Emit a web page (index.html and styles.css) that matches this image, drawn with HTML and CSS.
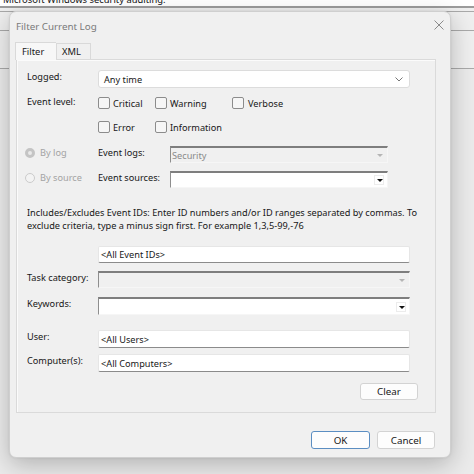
FILE: index.html
```html
<!DOCTYPE html>
<html>
<head>
<meta charset="utf-8">
<link rel="stylesheet" href="styles.css">
</head>
<body>
<div class="screen">
  <div class="topstrip"><span class="toptext">Microsoft Windows security auditing.</span></div>
  <div class="backdrop">
    <div class="brow r1"></div>
    <div class="brow r2"></div>
    <div class="brow r3"></div>
  </div>

  <div class="dialog">
    <div class="titlebar">
      <span class="title">Filter Current Log</span>
      <svg class="close" width="10" height="10" viewBox="0 0 10 10"><path d="M0.5 0.5 L9.5 9.5 M9.5 0.5 L0.5 9.5" stroke="#8a8a8a" stroke-width="1"/></svg>
    </div>
    <div class="tabs">
      <div class="tab active">Filter</div>
      <div class="tab">XML</div>
    </div>
    <div class="panel">
      <div class="row logged">
        <div class="lbl">Logged:</div>
        <div class="select">
          <span>Any time</span>
          <svg width="8" height="5" viewBox="0 0 8 5"><path d="M0.5 0.5 L4 4 L7.5 0.5" fill="none" stroke="#777" stroke-width="1"/></svg>
        </div>
      </div>

      <div class="row levels">
        <div class="lbl">Event level:</div>
        <div class="checks">
          <label class="chk"><span class="box"></span>Critical</label>
          <label class="chk"><span class="box"></span>Warning</label>
          <label class="chk"><span class="box"></span>Verbose</label>
          <label class="chk"><span class="box"></span>Error</label>
          <label class="chk"><span class="box"></span>Information</label>
        </div>
      </div>

      <div class="srcrow bylog">
        <div class="radio dis"><span class="dot on"></span>By log</div>
        <div class="lbl2">Event logs:</div>
        <div class="combo disabled"><span>Security</span><span class="arrow grey"></span></div>
      </div>
      <div class="srcrow bysource">
        <div class="radio dis"><span class="dot"></span>By source</div>
        <div class="lbl2">Event sources:</div>
        <div class="combo"><span></span><span class="arrow"></span></div>
      </div>

      <p class="help">Includes/Excludes Event IDs: Enter ID numbers and/or ID ranges separated by commas. To<br>exclude criteria, type a minus sign first. For example 1,3,5-99,-76</p>

      <div class="row ids">
        <div class="lbl"></div>
        <div class="text">&lt;All Event IDs&gt;</div>
      </div>
      <div class="row task">
        <div class="lbl">Task category:</div>
        <div class="combo disabled wide"><span></span><span class="arrow grey"></span></div>
      </div>
      <div class="row keywords">
        <div class="lbl">Keywords:</div>
        <div class="combo wide"><span></span><span class="arrow"></span></div>
      </div>
      <div class="row user">
        <div class="lbl">User:</div>
        <div class="text">&lt;All Users&gt;</div>
      </div>
      <div class="row computer">
        <div class="lbl">Computer(s):</div>
        <div class="text">&lt;All Computers&gt;</div>
      </div>
      <div class="clearrow"><div class="btn clear">Clear</div></div>
    </div>
    <div class="footer">
      <div class="btn ok">OK</div>
      <div class="btn cancel">Cancel</div>
    </div>
  </div>
</div>
</body>
</html>
```
FILE: styles.css
```css
* { box-sizing: border-box; }
html, body { margin: 0; padding: 0; }
body {
  width: 474px; height: 474px; overflow: hidden;
  font-family: "Noto Sans", "Open Sans", sans-serif;
  font-size: 9.2px;
  color: #171717;
  background: #e9e9e9;
}
.screen { position: relative; width: 474px; height: 474px; overflow: hidden; background: #ebebeb; }
.topstrip {
  height: 8px; background: #fff; border-bottom: 2px solid #9c9c9c; overflow: hidden;
}
.toptext {
  display: block; font-family: "Noto Sans", sans-serif; font-size: 9.4px; line-height: 12px;
  margin-top: -6px; padding-left: 3px; color: #111;
}
.backdrop { background: #efefef; }
.brow { border-bottom: 1px solid #a9a9a9; }
.r1 { height: 4px; }
.r2 { height: 19px; }
.r3 { height: 38px; }

.dialog {
  position: absolute; left: 9px; top: 11px; width: 442px; height: 447px;
  background: #f0f0f0; border: 1px solid #cfcfcf; border-radius: 7px;
  box-shadow: 0 7px 24px rgba(0,0,0,0.24), 0 0 3px rgba(0,0,0,0.08);
  display: flex; flex-direction: column;
}
.titlebar {
  height: 30px; display: flex; align-items: center; justify-content: space-between;
  padding: 0 6px 2px 6px;
}
.title { color: #7a7a7a; font-size: 9.8px; }
.close { margin-top: -2px; }

.tabs { display: flex; height: 17px; padding-left: 5px; position: relative; z-index: 1; }
.tab {
  height: 16px; margin-top: 1px; padding: 0 0 0 8px; line-height: 15px;
  border: 1px solid #d9d9d9; border-bottom: none; background: #f0f0f0; font-size: 9.4px;
}
.tab.active {
  height: 18px; margin-top: 0; width: 41px; padding: 0 0 0 6px; background: #f7f7f7; line-height: 17px;
  border-color: #d9d9d9; border-right: none;
}
.tab:not(.active) { width: 35px; padding-left: 5px; }

.panel {
  margin-left: 6px; width: 420px; height: 354px;
  border: 1px solid #dadada; background: #f0f0f0;
  box-shadow: inset 1px 1px 0 #fbfbfb;
  padding: 10px 25px 0 10px;
}
.row { display: grid; grid-template-columns: 71px 1fr; align-items: start; }
.lbl { line-height: 13px; white-space: nowrap; }

.select {
  height: 18px; background: #fff; border: 1px solid #dcdcdc; border-radius: 3px;
  display: flex; align-items: center; justify-content: space-between; padding: 0 6px 0 5px;
}
.logged { height: 18px; }

.levels { margin-top: 7px; }
.checks { display: grid; grid-template-columns: 57px 77px auto; row-gap: 8px; }
.chk { display: flex; align-items: center; height: 16px; white-space: nowrap; }
.box {
  width: 12px; height: 12px; border: 1px solid #8c8c8c; border-radius: 2px; background: #f6f6f6;
  margin-right: 3px; flex: none;
}
.chk:nth-child(3) .box { margin-right: 4px; }

.srcrow { display: grid; grid-template-columns: 71px 72px 218px; align-items: start; height: 17px; }
.bylog { margin-top: 11px; }
.bysource { margin-top: 8px; }
.radio { display: flex; align-items: center; height: 13px; margin-left: -2px; color: #a3a3a3; }
.dot {
  width: 10px; height: 10px; border-radius: 50%; border: 1px solid #cbcbcb; background: #f3f3f3;
  margin-right: 5px; flex: none;
}
.dot.on { border: 3px solid #c4c4c4; background: #e9e9e9; }
.lbl2 { line-height: 13px; white-space: nowrap; }

.combo {
  height: 17px; display: flex; align-items: center; justify-content: space-between;
  background: #fff; border-top: 2px solid #7e7e7e; border-left: 1px solid #8e8e8e;
  border-right: 1px solid #f6f6f6; border-bottom: 1px solid #f6f6f6;
  padding: 0 3px 0 1px; color: #8a8a8a;
}
.combo.disabled { background: #f0f0f0; }
.keywords .combo { height: 18px; }
.arrow {
  width: 10px; height: 10px; background: #fff; position: relative; display: block;
  border: 1px solid #ececec;
}
.arrow::after {
  content: ""; position: absolute; left: 2px; top: 3px;
  border-left: 3px solid transparent; border-right: 3px solid transparent; border-top: 3px solid #111;
}
.arrow.grey { background: transparent; border-color: transparent; }
.arrow.grey::after { border-top-color: #b5b5b5; }

.help { margin: 18px 0 0 0; line-height: 13px; white-space: nowrap; }

.text {
  height: 17px; background: #fff; border: 1px solid #e6e6e6; border-bottom: 1px solid #8b8b8b;
  border-radius: 2px; display: flex; align-items: center; padding: 0 2px;
}
.ids { margin-top: 14px; }
.task { margin-top: 8px; }
.keywords { margin-top: 9px; }
.user { margin-top: 15px; }
.user .text, .computer .text { height: 18px; }
.computer { margin-top: 6px; }

.clearrow { display: flex; justify-content: flex-end; margin-top: 11px; margin-right: -8px; }
.btn {
  height: 18px; background: #fdfdfd; border: 1px solid #d3d3d3; border-radius: 3px;
  display: flex; align-items: center; justify-content: center; font-size: 9.8px;
}
.clear { width: 58px; height: 17px; }

.footer { display: flex; justify-content: flex-end; gap: 7px; margin-top: 18px; padding-right: 15px; }
.ok { width: 59px; border: 1.5px solid #5b8ec2; }
.cancel { width: 58px; }
```
